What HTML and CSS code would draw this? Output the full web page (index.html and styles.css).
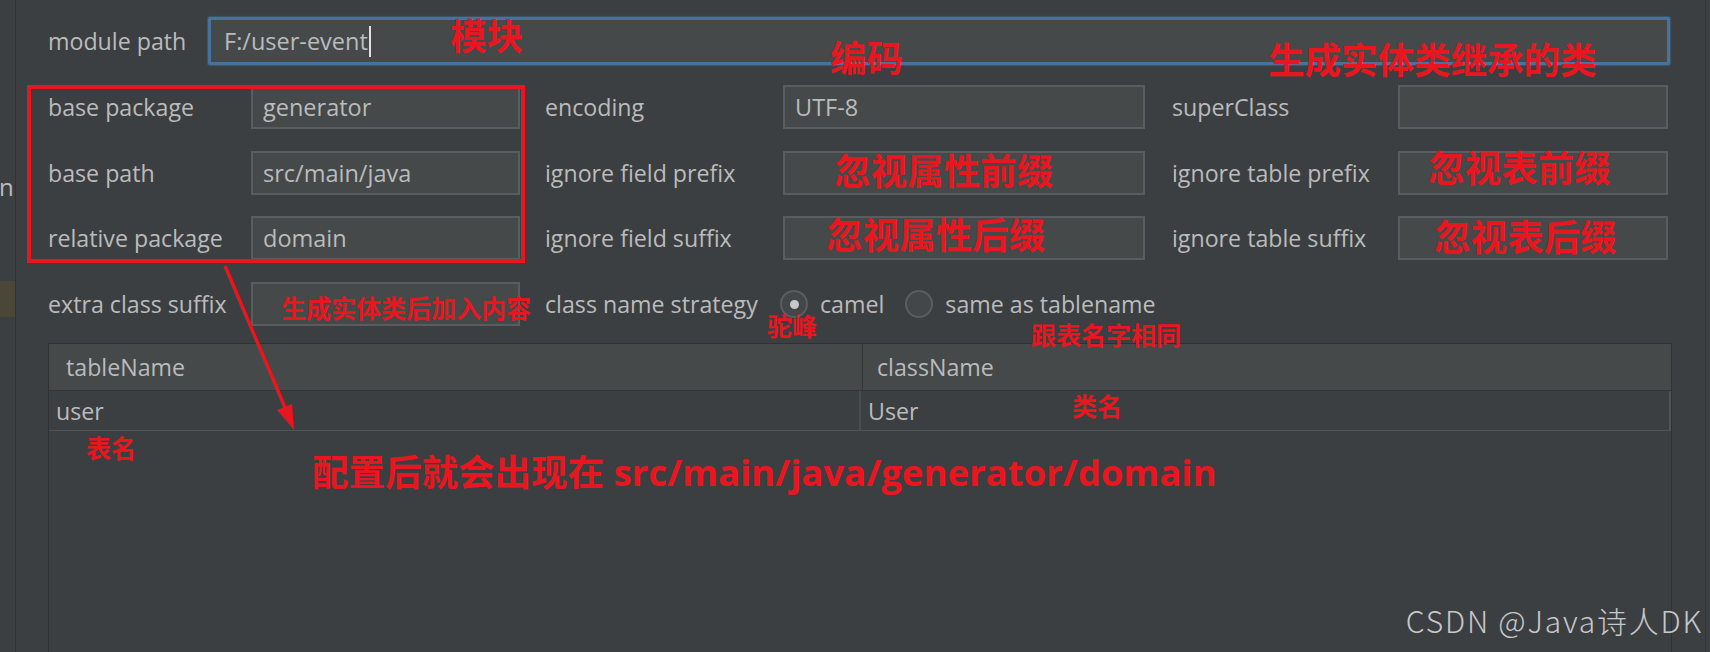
FILE: index.html
```html
<!DOCTYPE html>
<html lang="zh-CN">
<head>
<meta charset="utf-8">
<title>Generator settings</title>
<link rel="stylesheet" href="styles.css">
</head>
<body>
<div class="window">
  <aside class="gutter">
    <span class="gutter-n">n</span>
    <span class="gutter-mark"></span>
  </aside>

  <main class="panel">
    <div class="module-row">
      <span class="label module-label">module path</span>
      <div class="field focused"><span class="value">F:/user-event</span><span class="caret"></span></div>
    </div>

    <div class="form-grid">
      <span class="label">base package</span>
      <div class="field"><span class="value">generator</span></div>
      <span class="label col-label">encoding</span>
      <div class="field"><span class="value">UTF-8</span></div>
      <span class="label col-label wide">superClass</span>
      <div class="field"></div>

      <span class="label">base path</span>
      <div class="field"><span class="value">src/main/java</span></div>
      <span class="label col-label">ignore field prefix</span>
      <div class="field"></div>
      <span class="label col-label wide">ignore table prefix</span>
      <div class="field"></div>

      <span class="label">relative package</span>
      <div class="field"><span class="value">domain</span></div>
      <span class="label col-label">ignore field suffix</span>
      <div class="field"></div>
      <span class="label col-label wide">ignore table suffix</span>
      <div class="field"></div>

      <span class="label">extra class suffix</span>
      <div class="field"></div>
      <span class="label col-label">class name strategy</span>
      <div class="radio-group">
        <span class="radio checked"></span><span class="label radio-text">camel</span>
        <span class="radio"></span><span class="label radio-text">same as tablename</span>
      </div>
    </div>

    <div class="table">
      <div class="thead">
        <div class="th th-first">tableName</div>
        <div class="th">className</div>
      </div>
      <div class="trow">
        <div class="td td-first">user</div>
        <div class="td">User</div>
      </div>
      <div class="tbody-empty"></div>
    </div>
  </main>

  <div class="right-edge"></div>

  <div class="note-box"></div>
  <svg class="note-arrow" width="1710" height="652" viewBox="0 0 1710 652">
    <line x1="225" y1="266" x2="286" y2="410" stroke="#e8161f" stroke-width="3.5"/>
    <polygon points="294,430 277,410 292,404" fill="#e8161f"/>
  </svg>

  <span class="note big n-module">模块</span>
  <span class="note big n-encoding">编码</span>
  <span class="note big n-super">生成实体类继承的类</span>
  <span class="note big n-fprefix">忽视属性前缀</span>
  <span class="note big n-fsuffix">忽视属性后缀</span>
  <span class="note big n-tprefix">忽视表前缀</span>
  <span class="note big n-tsuffix">忽视表后缀</span>
  <span class="note small n-extra">生成实体类后加入内容</span>
  <span class="note small n-camel">驼峰</span>
  <span class="note small n-same">跟表名字相同</span>
  <span class="note small n-class">类名</span>
  <span class="note small n-table">表名</span>
  <span class="note big n-path">配置后就会出现在 src/main/java/generator/domain</span>

  <span class="watermark">CSDN @Java诗人DK</span>
</div>
</body>
</html>
```

FILE: styles.css
```css
html, body {
  margin: 0;
  padding: 0;
  width: 1710px;
  height: 652px;
  overflow: hidden;
  background: #3c3f41;
}

.window {
  position: relative;
  display: flex;
  width: 1710px;
  height: 652px;
  font-family: "Open Sans", "Noto Sans", sans-serif;
  color: #bbbbbb;
}

/* left gutter */
.gutter {
  width: 15px;
  flex: none;
  border-right: 1px solid #303234;
  display: flex;
  flex-direction: column;
  overflow: hidden;
}
.gutter-n {
  margin-top: 172px;
  margin-left: -1px;
  font-size: 24px;
  line-height: 30px;
  color: #bbbbbb;
}
.gutter-mark {
  margin-top: 79px;
  height: 36px;
  background: #4a4738;
}

/* main panel */
.panel {
  flex: 1;
  display: flex;
  flex-direction: column;
  padding: 17px 33px 0 32px;
  min-width: 0;
}

.right-edge {
  width: 4px;
  flex: none;
  border-left: 1px solid #333537;
}

.label {
  font-size: 23.2px;
  line-height: 30px;
  white-space: nowrap;
  color: #bbbbbb;
}

.module-row {
  display: flex;
  align-items: center;
  height: 48px;
}
.module-label {
  width: 160px;
  flex: none;
}

.field {
  box-sizing: border-box;
  height: 44px;
  background: #45494a;
  border: 2px solid #5a5d5f;
  display: flex;
  align-items: center;
  padding-left: 10px;
  font-size: 23.5px;
  color: #bbbbbb;
  white-space: nowrap;
  overflow: hidden;
}
.field.focused {
  width: 1462px;
  height: 48px;
  border: 3px solid #4672a0;
  border-radius: 2px;
  box-shadow: 0 0 1px 1px rgba(70, 114, 160, 0.45);
  padding-left: 13px;
}
.caret {
  display: inline-block;
  width: 2px;
  height: 31px;
  margin-left: 1px;
  background: #e0e0e0;
}

/* form grid */
.form-grid {
  margin-top: 20px;
  display: grid;
  grid-template-columns: 203px 269px 263px 362px 253px 270px;
  grid-auto-rows: 44px;
  row-gap: 21.7px;
  align-items: center;
}
.col-label {
  padding-left: 25px;
}
.col-label.wide {
  padding-left: 27px;
}

.radio-group {
  grid-column: 4 / 7;
  display: flex;
  align-items: center;
  margin-left: -3px;
}
.radio {
  box-sizing: border-box;
  width: 28px;
  height: 28px;
  border-radius: 50%;
  border: 2px solid #5a5d5f;
  background: #43474a;
  display: flex;
  align-items: center;
  justify-content: center;
  flex: none;
}
.radio.checked::after {
  content: "";
  width: 9px;
  height: 9px;
  border-radius: 50%;
  background: #c9c9c9;
}
.radio-text {
  margin-left: 12px;
  margin-right: 21px;
}

/* table */
.table {
  margin-top: 17px;
  flex: 1;
  display: flex;
  flex-direction: column;
  border: 1px solid #2f3133;
  border-bottom: none;
}
.thead {
  display: flex;
  height: 46px;
  background: #45494a;
  border-bottom: 1px solid #333537;
}
.th {
  flex: 1;
  display: flex;
  align-items: center;
  padding-left: 14px;
  font-size: 23.2px;
}
.th-first {
  flex: none;
  width: 814px;
  padding-left: 17px;
  box-sizing: border-box;
  border-right: 1px solid #333537;
}
.trow {
  display: flex;
  height: 39px;
  border-bottom: 1px solid #505456;
  border-right: 2px solid #505456;
  background: #3c3f41;
}
.td {
  flex: 1;
  display: flex;
  align-items: center;
  padding-left: 7px;
  font-size: 23.2px;
}
.td-first {
  flex: none;
  width: 812px;
  box-sizing: border-box;
  border-right: 2px solid #4a4d50;
}
.tbody-empty {
  flex: 1;
}

/* red annotations */
.note-box {
  position: absolute;
  left: 27px;
  top: 85px;
  width: 490px;
  height: 170px;
  border: 4px solid #e8161f;
}
.note-arrow {
  position: absolute;
  left: 0;
  top: 0;
  pointer-events: none;
}
.note {
  position: absolute;
  font-family: "Open Sans", "Noto Sans CJK SC", sans-serif;
  font-weight: 700;
  color: #e8161f;
  line-height: 1;
  white-space: nowrap;
}
.note.big { font-size: 36.5px; }
.note.small { font-size: 25px; }

.n-module { left: 450px; top: 18px; }
.n-encoding { left: 830px; top: 40px; }
.n-super { left: 1268px; top: 42px; }
.n-fprefix { left: 834px; top: 153px; }
.n-fsuffix { left: 826px; top: 217px; }
.n-tprefix { left: 1428px; top: 150px; }
.n-tsuffix { left: 1434px; top: 219px; }
.n-extra { left: 281px; top: 296px; }
.n-camel { left: 767px; top: 314px; }
.n-same { left: 1031px; top: 323px; }
.n-class { left: 1072px; top: 394px; }
.n-table { left: 86px; top: 436px; }
.n-path { left: 312px; top: 454px; }

.watermark {
  position: absolute;
  right: 7px;
  top: 605px;
  font-family: "Noto Sans CJK SC", sans-serif;
  font-weight: 300;
  font-size: 30px;
  letter-spacing: 1.8px;
  line-height: 1;
  color: #c8c8c8;
  white-space: nowrap;
}
```
